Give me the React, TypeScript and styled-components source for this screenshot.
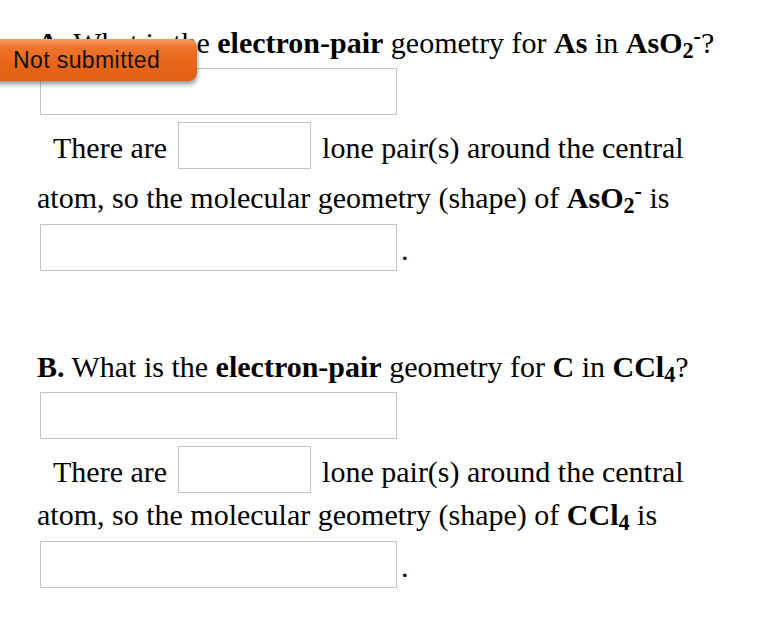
import styled, { createGlobalStyle } from "styled-components";

const GlobalStyle = createGlobalStyle`
  body {
    margin: 0;
    background: #fff;
    font-family: "Liberation Serif", "Times New Roman", serif;
    color: #000;
  }
`

const Page = styled.div`
  position: relative;
  padding: 26px 0 0 37px;
  width: 700px;
`

const Badge = styled.div`
  position: absolute;
  left: -12px;
  top: 39px;
  width: 209px;
  height: 42px;
  box-sizing: border-box;
  padding-left: 25px;
  display: flex;
  align-items: center;
  border-radius: 8px;
  background: linear-gradient(to bottom, #f5a069 0%, #ee7630 18%, #e8661a 55%, #e25e12 100%);
  box-shadow: 0 3px 5px rgba(0, 0, 0, 0.45);
  font-family: "Liberation Sans", Arial, sans-serif;
  font-size: 23px;
  letter-spacing: 0.4px;
  color: #111;
`

const Part = styled.section`
  & + & {
    margin-top: 79px;
  }
`

const Title = styled.div`
  font-size: 30px;
  line-height: 34px;
`

const Row = styled.div<{ $gap: number }>`
  display: flex;
  align-items: flex-end;
  margin-top: ${p => p.$gap}px;
  font-size: 30px;
  line-height: 34px;
  white-space: nowrap;
`

const Words = styled.span<{ $indent?: number }>`
  padding-bottom: 4px;
  margin-left: ${p => p.$indent ?? 0}px;
`

const Line = styled.div<{ $gap: number }>`
  margin-top: ${p => p.$gap}px;
  font-size: 30px;
  line-height: 34px;
  white-space: nowrap;
`

const Field = styled.input<{ $wide?: boolean }>`
  display: block;
  box-sizing: border-box;
  width: ${p => (p.$wide ? 357 : 133)}px;
  height: 47px;
  margin: 0 ${p => (p.$wide ? 0 : 11)}px 0 ${p => (p.$wide ? 3 : 11)}px;
  border: 1px solid #c4c4c4;
  background: #fff;
  outline: none;
  padding: 0 6px;
  font: inherit;
`

const Period = styled.span`
  align-self: flex-end;
  margin-left: 4px;
  font-size: 30px;
  line-height: 30px;
  padding-bottom: 6px;
`

const Sub = styled.sub`
  font-size: 0.74em;
  line-height: 0;
  vertical-align: -5px;
`

const Sup = styled.sup`
  font-size: 0.74em;
  line-height: 0;
  vertical-align: 9px;
`

function Formula({ children, sub, sup }: { children: string; sub: string; sup?: string }) {
  return (
    <b>
      {children}
      <Sub>{sub}</Sub>
      {sup && <Sup>{sup}</Sup>}
    </b>
  )
}

type PartProps = {
  letter: string
  atom: string
  base: string
  sub: string
  sup?: string
  atomGap: number
}

function Question({ letter, atom, base, sub, sup, atomGap }: PartProps) {
  const formula = <Formula sub={sub} sup={sup}>{base}</Formula>
  return (
    <Part>
      <Title>
        <b>{letter}.</b> What is the <b>electron-pair</b> geometry for <b>{atom}</b> in {formula}?
      </Title>
      <Row $gap={8}>
        <Field $wide aria-label="electron-pair geometry"/>
      </Row>
      <Row $gap={7}>
        <Words $indent={16}>There are</Words>
        <Field aria-label="lone pairs"/>
        <Words>lone pair(s) around the central</Words>
      </Row>
      <Line $gap={atomGap}>
        atom, so the molecular geometry (shape) of {formula} is
      </Line>
      <Row $gap={9}>
        <Field $wide aria-label="molecular geometry"/>
        <Period>.</Period>
      </Row>
    </Part>
  )
}

export default function App() {
  return (
    <>
      <GlobalStyle/>
      <Page>
        <Question letter="A" atom="As" base="AsO" sub="2" sup="-" atomGap={12}/>
        <Question letter="B" atom="C" base="CCl" sub="4" atomGap={5}/>
      </Page>
      <Badge>Not submitted</Badge>
    </>
  )
}
